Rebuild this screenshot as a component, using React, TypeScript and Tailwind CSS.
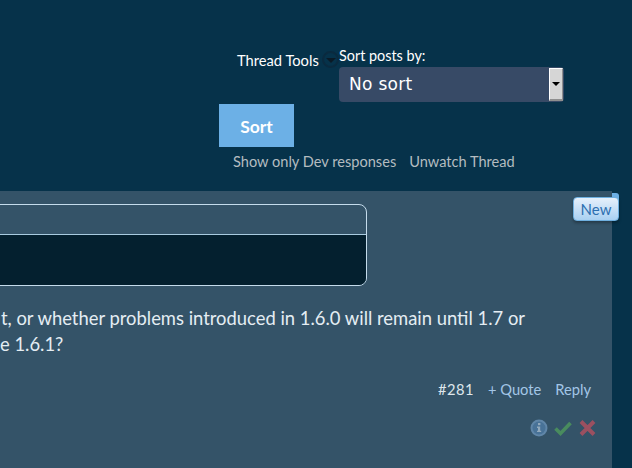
import React from "react";

const font = { lato: "font-['Lato','Carlito',sans-serif]" };

const ThreadHeader = () => {
    return (
        <div className="h-[191px] pt-[47px]">
            <div className="flex items-start ml-[237px]">
                <span className="mt-[4px] w-[82px] whitespace-nowrap text-[14.7px] leading-[18px] text-white">Thread Tools</span>
                <span className="mt-[4px] ml-[3px] w-[17px] h-[17px] rounded-full border-2 border-[#0a2a3f] bg-[#06324a] flex items-center justify-center">
                    <span className="mt-[2px] w-0 h-0 border-l-[5px] border-r-[5px] border-t-[5px] border-l-transparent border-r-transparent border-t-[#0a1a26]"></span>
                </span>
                <div className="ml-0">
                    <div className="text-[14.4px] leading-[18px] text-white">Sort posts by:</div>
                    <div className="mt-[2px] w-[225px] h-[35px] rounded-[4px] bg-[#374a66] flex items-center justify-between pl-[10px] pr-[1px]">
                        <span className="font-['DejaVu_Sans',sans-serif] text-[17px] tracking-[0.3px] text-white">No sort</span>
                        <span className="w-[14px] h-[33px] bg-[#d6d6d6] border-r border-b-2 border-[#8f8f8f] border-l border-t border-l-white border-t-white flex items-center justify-center">
                            <span className="w-0 h-0 border-l-[4px] border-r-[4px] border-t-[4px] border-l-transparent border-r-transparent border-t-black"></span>
                        </span>
                    </div>
                </div>
            </div>
            <button className="block ml-[219px] mt-[2px] pt-[3px] w-[75px] h-[43px] bg-[#6cb0e6] text-white font-bold text-[17.5px]">Sort</button>
            <div className="flex ml-[233px] mt-[6px] gap-[13px] text-[14.6px] leading-[18px] text-[#b4bcc0]">
                <span>Show only Dev responses</span>
                <span>Unwatch Thread</span>
            </div>
        </div>
    );
};

const NewBadge = () => {
    return (
        <>
            <span className="absolute left-[612px] top-[193px] w-[7px] h-[8px] rounded-tr-[3px] bg-[#6cb0e6]"></span>
            <span className="absolute left-[573px] top-[197px] w-[46px] h-[24px] rounded-[4px] border border-[#6fb0e0] bg-gradient-to-b from-[#e6f0fb] to-[#a9d0f2] text-[#2d6fb0] text-[15px] leading-[22px] text-center shadow-[0_2px_3px_rgba(0,0,0,0.3)]">
                New
            </span>
        </>
    );
};

const PostFooter = () => {
    return (
        <>
            <div className="flex justify-end items-center mt-[23px] mr-[21px] h-[18px] text-[14.7px] leading-[18px] text-[#a3c6e6]">
                <span className="text-[#dfe7ec] tracking-[0.5px]">#281</span>
                <span className="ml-[14px]">+ Quote</span>
                <span className="ml-[14px]">Reply</span>
            </div>
            <div className="flex justify-end items-center mt-[21px] mr-[15px] gap-[5px] opacity-80">
                <svg width="18" height="18" viewBox="0 0 18 18">
                    <circle cx="9" cy="9" r="8.5" fill="#6b93b8" />
                    <circle cx="9" cy="9" r="6.5" fill="#4d7aa3" />
                    <rect x="8" y="4" width="2.4" height="2.2" fill="#a9bfd2" />
                    <path d="M7 7.5h3.2v4.2h1v1.4H7v-1.4h1V8.9H7z" fill="#a9bfd2" />
                </svg>
                <svg width="20" height="18" viewBox="0 0 20 18">
                    <path d="M2.5 9.5 L7.5 14.5 L17.5 4" fill="none" stroke="#4f9a5c" strokeWidth="3.6" />
                </svg>
                <svg width="19" height="18" viewBox="0 0 19 18">
                    <path d="M3 2.5 L16 15.5 M16 2.5 L3 15.5" fill="none" stroke="#b5505f" strokeWidth="4" />
                </svg>
            </div>
        </>
    );
};

const App = () => {
    return (
        <div className={`relative w-[632px] h-[468px] overflow-hidden bg-[#06324a] ${font.lato}`}>
            <ThreadHeader />
            <div className="w-[612px] h-[277px] bg-[#345368] pt-[13px] overflow-hidden">
                <div className="ml-[-20px] w-[387px] h-[82px] rounded-[8px] border border-[#c5dcec] overflow-hidden">
                    <div className="h-[30px] border-b border-[#a9cbe0]"></div>
                    <div className="h-[51px] bg-[#04202f]"></div>
                </div>
                <div className="mt-[19px] w-[525px] text-[18.4px] leading-[26px] text-[#e4edf3] whitespace-nowrap">
                    <div className="flex justify-end">t, or whether problems introduced in 1.6.0 will remain until 1.7 or</div>
                    <div>e 1.6.1?</div>
                </div>
                <PostFooter />
            </div>
            <NewBadge />
        </div>
    );
};

export default App;
